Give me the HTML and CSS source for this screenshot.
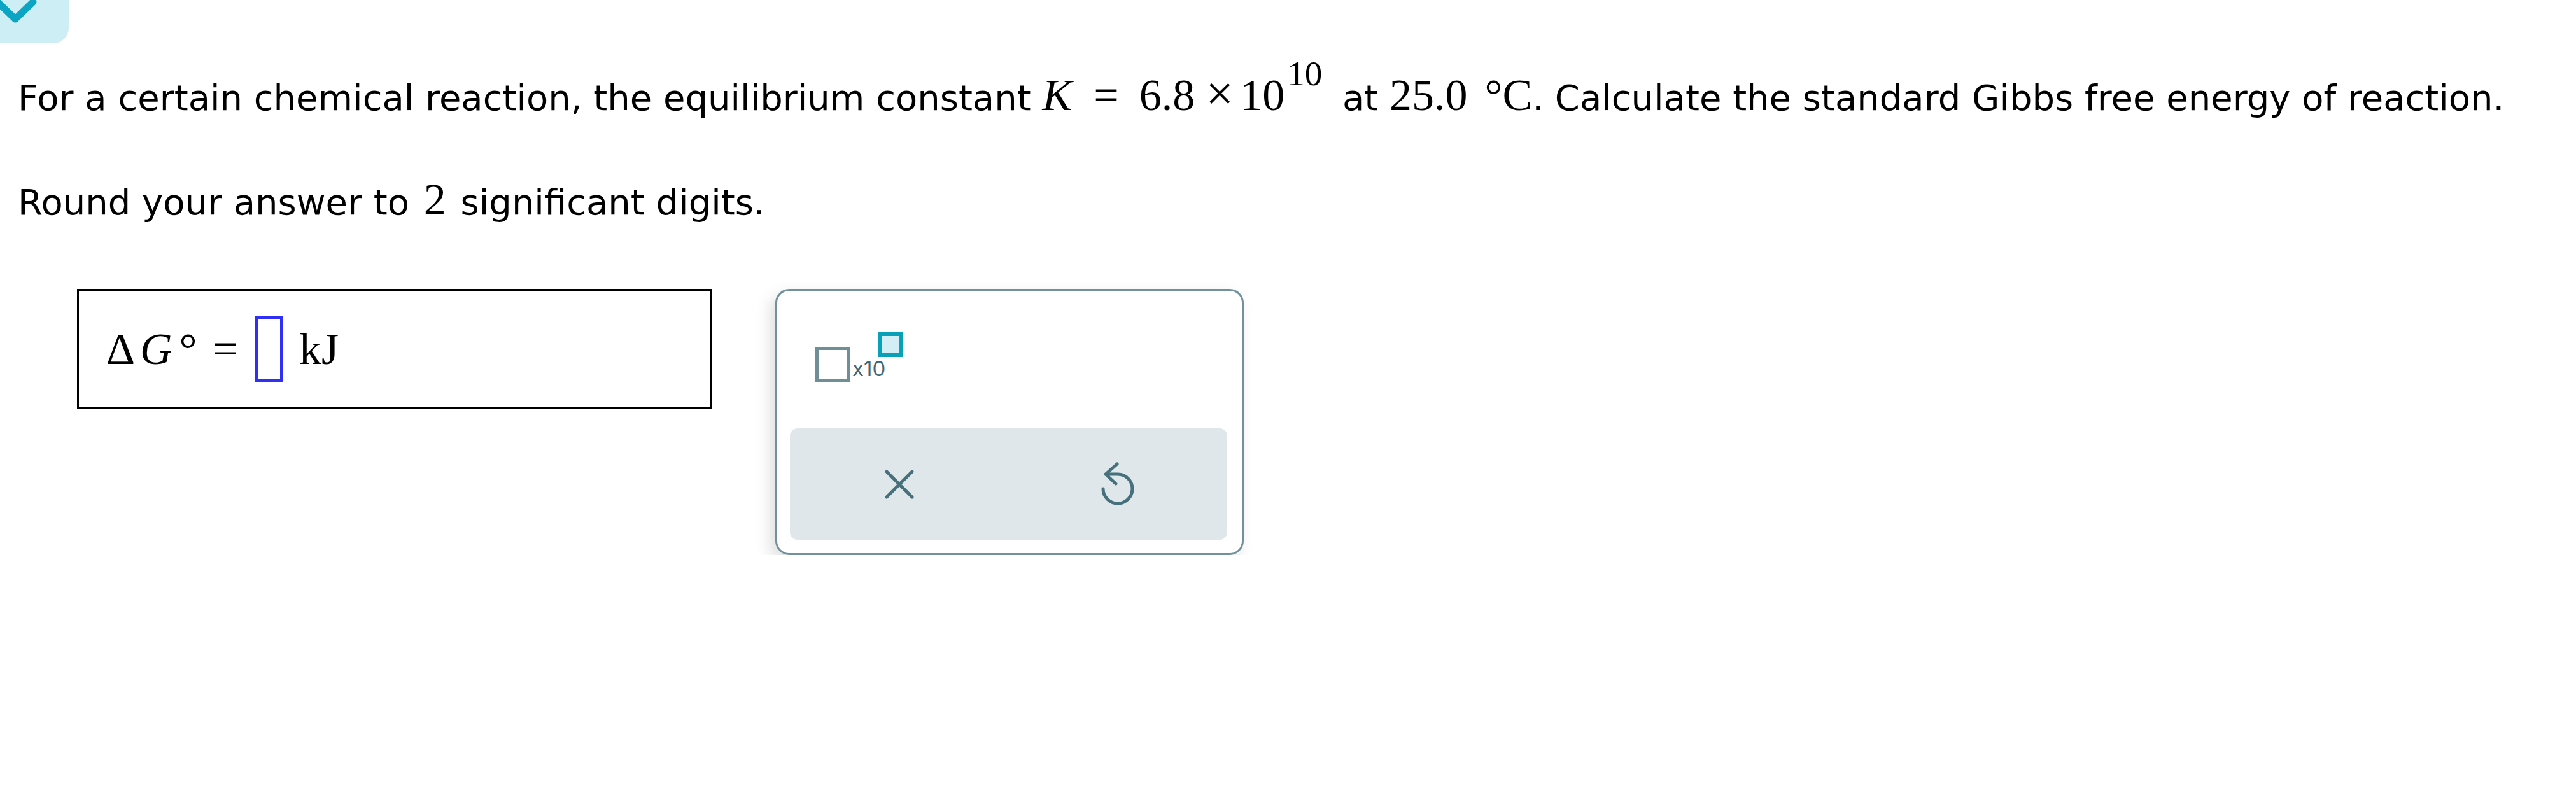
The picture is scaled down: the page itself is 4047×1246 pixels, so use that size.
FILE: index.html
```html
<!DOCTYPE html>
<html lang="en">
<head>
<meta charset="utf-8">
<title>Gibbs free energy</title>
<link rel="stylesheet" href="styles.css">
</head>
<body>
<div class="tab">
  <svg class="tab-chevron" width="108" height="68" viewBox="0 0 108 68"><path d="M-6 1 L24 30 L52 3"/></svg>
</div>
<main class="question">
  <p class="line">For a certain chemical reaction, the equilibrium constant <span class="m m-k">K</span><span class="m m-eq">=</span><span class="m m-num">6.8</span><span class="m m-times">×</span><span class="m m-base">10</span><span class="m m-sup">10</span> at <span class="m m-temp">25.0</span><span class="m m-deg">°C</span>. Calculate the standard Gibbs free energy of reaction.</p>
  <p class="line line-round">Round your answer to <span class="m m-two">2</span> significant digits.</p>
  <div class="answer-row">
    <div class="answer-box">
      <span class="a-delta">Δ</span><span class="a-g">G</span><span class="a-deg">°</span><span class="a-eq">=</span><span class="a-input"></span><span class="a-unit">kJ</span>
    </div>
    <div class="keypad">
      <div class="sci">
        <span class="sq-big"></span><span class="x10">x10</span><span class="sq-small"></span>
      </div>
      <div class="actions">
        <div class="act">
          <svg width="48" height="48" viewBox="0 0 48 48" class="ico"><path d="M4 4 L44 44 M44 4 L4 44"/></svg>
        </div>
        <div class="act">
          <svg width="60" height="74" viewBox="0 0 60 74" class="ico"><path d="M29 5 L11 21 L27 36 M11 21 H30 A23 23 0 1 1 7 44"/></svg>
        </div>
      </div>
    </div>
  </div>
</main>
</body>
</html>
```
FILE: styles.css
```css
html, body {
  margin: 0;
  padding: 0;
  background: #ffffff;
}

body {
  font-family: "DejaVu Sans", Verdana, sans-serif;
  color: #000;
}

.tab {
  width: 108px;
  height: 68px;
  background: #cdeef4;
  border-bottom-right-radius: 24px;
  overflow: hidden;
}

.tab-chevron {
  display: block;
}

.tab-chevron path {
  fill: none;
  stroke: #0ba4c3;
  stroke-width: 11;
  stroke-linecap: round;
  stroke-linejoin: round;
}

.question {
  padding: 36px 0 0 28px;
}

.line {
  margin: 0;
  font-size: 56px;
  line-height: 100px;
  white-space: nowrap;
}

.line-round {
  margin-top: 64px;
}

.m {
  font-family: "Liberation Serif", "Times New Roman", serif;
  font-size: 70px;
  line-height: 0;
}

.m-k {
  font-style: italic;
}

.m-eq {
  margin-left: 34px;
}

.m-num {
  margin-left: 32px;
}

.m-times {
  font-size: 78px;
  margin-left: 17px;
}

.m-base {
  margin-left: 10px;
}

.m-sup {
  font-size: 55px;
  vertical-align: 39px;
  margin-left: 4px;
  margin-right: 14px;
}

.m-deg {
  margin-left: 27px;
}

.m-two {
  margin: 0 5px 0 5px;
}

.answer-row {
  display: flex;
  align-items: flex-start;
  margin: 86px 0 0 93px;
}

.answer-box {
  box-sizing: border-box;
  width: 998px;
  height: 189px;
  border: 3px solid #000;
  display: flex;
  align-items: center;
  padding-left: 43px;
  font-family: "Liberation Serif", "Times New Roman", serif;
  font-size: 70px;
  line-height: 1;
}

.a-g {
  font-style: italic;
  margin-left: 8px;
}

.a-deg {
  margin-left: 11px;
}

.a-eq {
  margin-left: 25px;
}

.a-input {
  box-sizing: border-box;
  width: 43px;
  height: 103px;
  border: 4px solid #2f2ff5;
  margin-left: 27px;
}

.a-unit {
  margin-left: 26px;
}

.keypad {
  box-sizing: border-box;
  width: 736px;
  height: 418px;
  margin-left: 99px;
  border: 3px solid #6f929b;
  border-radius: 22px;
  background: #fff;
  box-shadow: -8px 10px 24px rgba(0, 0, 0, 0.13);
  padding: 0 23px 21px 20px;
  display: flex;
  flex-direction: column;
}

.sci {
  display: flex;
  height: 79px;
  margin: 65px 0 0 40px;
}

.sq-big {
  box-sizing: border-box;
  width: 55px;
  height: 56px;
  border: 5px solid #6f8e96;
  align-self: flex-end;
}

.x10 {
  align-self: flex-end;
  font-family: Inter, "Open Sans", sans-serif;
  font-size: 33px;
  line-height: 33px;
  color: #3f6672;
  margin: 0 0 5px 3px;
}

.sq-small {
  box-sizing: border-box;
  width: 40px;
  height: 39px;
  border: 6px solid #0aa0b8;
  background: #d3eff5;
  align-self: flex-start;
  margin-left: -12px;
}

.actions {
  margin-top: auto;
  height: 175px;
  background: #dfe7ea;
  border-radius: 12px;
  display: grid;
  grid-template-columns: 1fr 1fr;
  align-items: center;
  justify-items: center;
}

.ico {
  display: block;
}

.ico path {
  fill: none;
  stroke: #45707c;
  stroke-width: 5;
  stroke-linecap: round;
  stroke-linejoin: round;
}
```
